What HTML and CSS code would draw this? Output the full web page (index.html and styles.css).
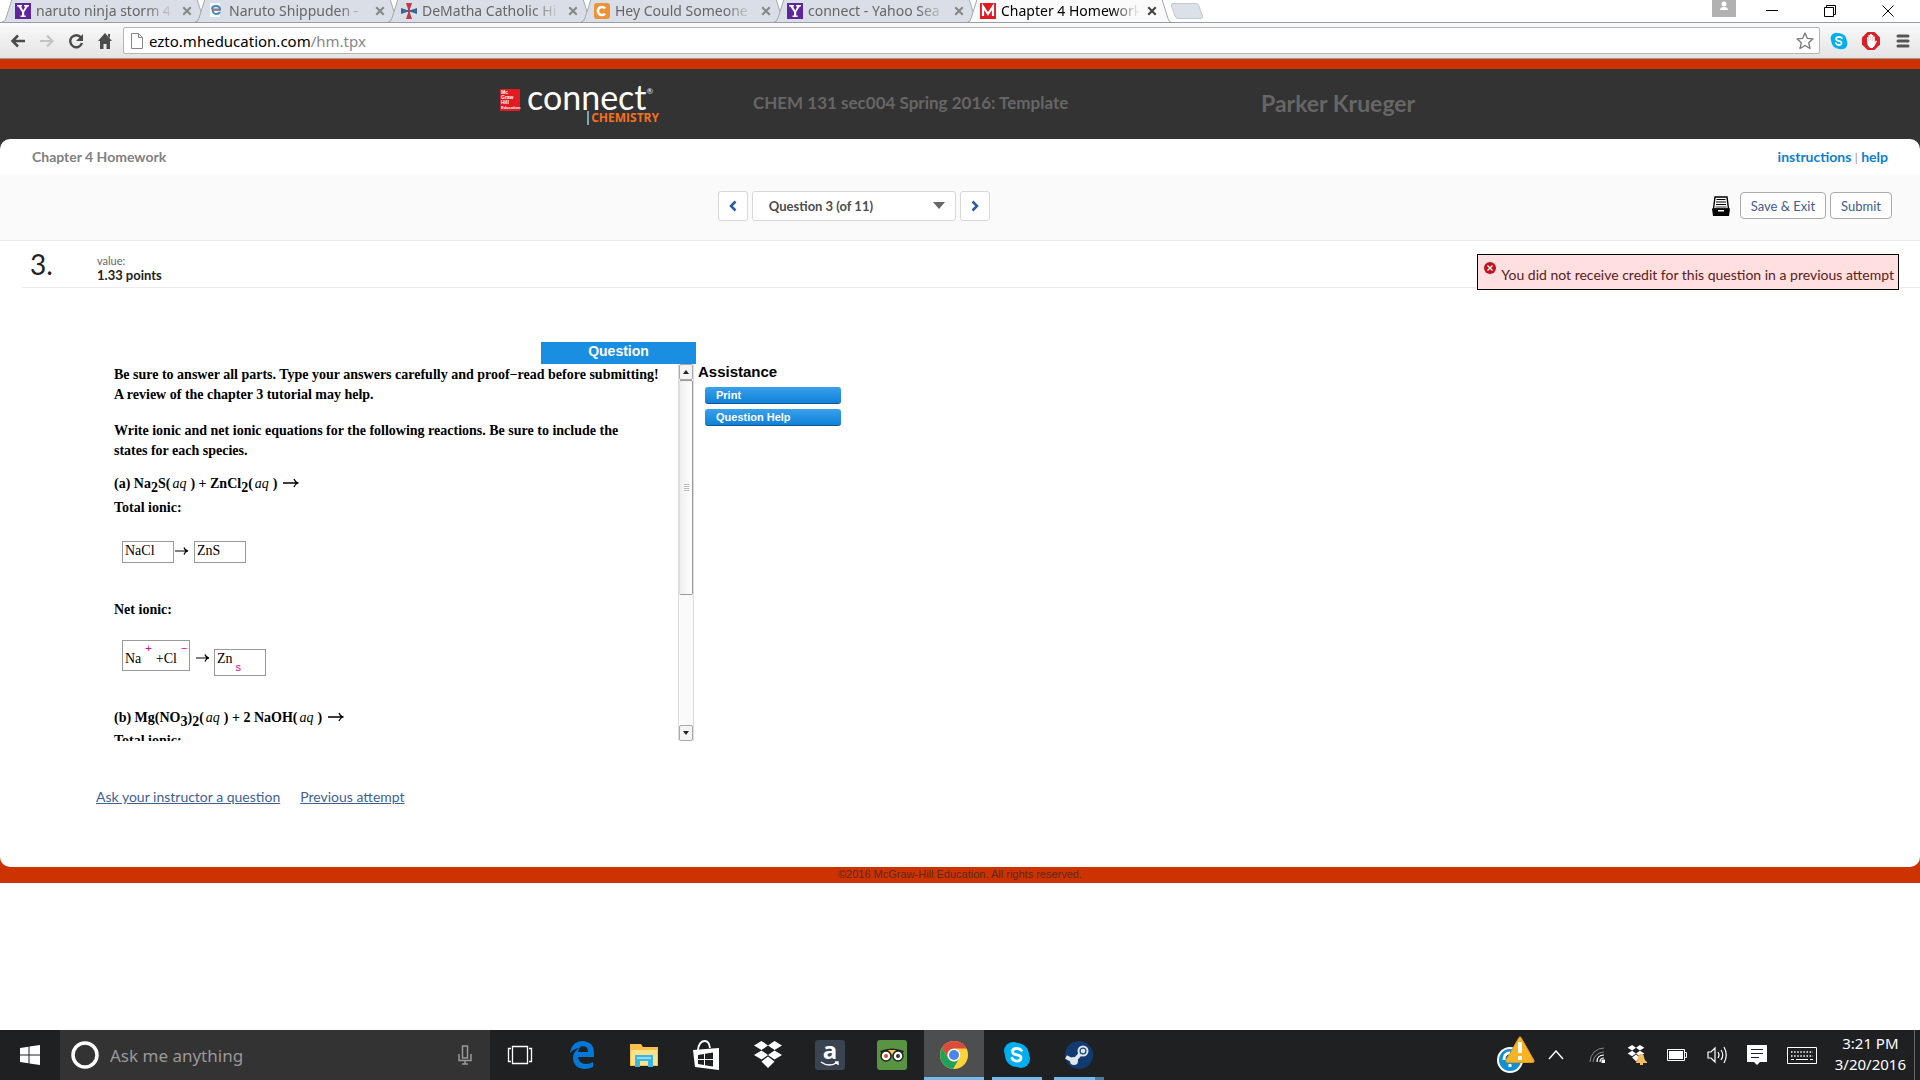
FILE: index.html
```html
<!DOCTYPE html>
<html lang="en">
<head>
<meta charset="utf-8">
<title>Chapter 4 Homework</title>
<link rel="stylesheet" href="styles.css">
</head>
<body>
<svg width="0" height="0" class="defs" aria-hidden="true">
  <symbol id="tabshape" viewBox="0 0 205 22"><path d="M0 22Q3 22 4 18L10 -1H195L201 18Q202 22 205 22"/></symbol>
  <symbol id="yahoo" viewBox="0 0 16 16"><path fill="#5f259f" d="M0 0h16v16H0z"/><path fill="#fff" d="M2 2h5v1.5H6L8.200 7.500 10.300 3.500H9V2h5v1.500h-1.200L9.200 9v3.500h1.500V14H5.500v-1.500H7V9L3.300 3.500H2z"/></symbol>
  <symbol id="x" viewBox="0 0 8 8"><path d="M1 1l6 6M7 1L1 7" fill="none" stroke="currentColor" stroke-width="1.700"/></symbol>
  <symbol id="skype" viewBox="0 0 28 28"><circle cx="10" cy="10" r="9"/><circle cx="18" cy="18" r="9"/><circle cx="14" cy="14" r="12"/><path d="M18.500 9.500Q17 7.500 14 7.500c-6 0-5.500 5.300-1 6.200l2 .5c4.600 1 3.600 6-1 6q-3.500 0-5-3" fill="none" stroke="#fff" stroke-width="2.800" stroke-linecap="round"/></symbol>
  <symbol id="dropbox" viewBox="0 0 30 28"><path fill="#fff" d="M8.500 0L15 4.500 8.500 9 1 4.500zM21.500 0L29 4.500 21.500 9 15 4.500zM8.500 9.500L15 14 8.500 18.500 1 14zM21.500 9.500L29 14 21.500 18.500 15 14zM15 15.500l6.500 5L15 27 8.500 20.500z"/></symbol>
</svg>

<header class="browser">
  <div class="tabstrip">
    <nav class="tabs" aria-label="Open tabs">
      <div class="tab"><svg class="shape" aria-hidden="true"><use href="#tabshape"/></svg><svg class="fav" aria-hidden="true"><use href="#yahoo"/></svg><a href="#">naruto ninja storm 4</a><button aria-label="Close tab"><svg><use href="#x"/></svg></button></div>
      <div class="tab"><svg class="shape" aria-hidden="true"><use href="#tabshape"/></svg><svg class="fav" viewBox="0 0 16 16" aria-hidden="true"><path fill="#f6f9fc" d="M2 0h10v14H2z"/><path d="M4 6Q4 3 8 3t4 3.500H4.500Q5 11 8 11t4-2" fill="none" stroke="#4688b8" stroke-width="2"/><path d="M5 7h7" stroke="#d66454" stroke-width="1.500"/></svg><a href="#">Naruto Shippuden -</a><button aria-label="Close tab"><svg><use href="#x"/></svg></button></div>
      <div class="tab"><svg class="shape" aria-hidden="true"><use href="#tabshape"/></svg><svg class="fav" viewBox="0 0 16 16" aria-hidden="true"><path fill="#c4384f" d="M5 0h6L9 6v4l2 6H5l2-6V6z"/><path fill="#3b6795" d="M0 5l6 2h4l6-2v6l-6-2H6l-6 2z"/><path fill="#c4384f" d="M7 5h2v6H7z"/></svg><a href="#">DeMatha Catholic Hi</a><button aria-label="Close tab"><svg><use href="#x"/></svg></button></div>
      <div class="tab"><svg class="shape" aria-hidden="true"><use href="#tabshape"/></svg><svg class="fav" viewBox="0 0 16 16" aria-hidden="true"><rect width="16" height="16" rx="3" fill="#ef9236"/><path d="M11 5.500A4 4 0 1 0 11 10.500" fill="none" stroke="#fff" stroke-width="2.600"/></svg><a href="#">Hey Could Someone</a><button aria-label="Close tab"><svg><use href="#x"/></svg></button></div>
      <div class="tab"><svg class="shape" aria-hidden="true"><use href="#tabshape"/></svg><svg class="fav" aria-hidden="true"><use href="#yahoo"/></svg><a href="#">connect - Yahoo Sea</a><button aria-label="Close tab"><svg><use href="#x"/></svg></button></div>
      <div class="tab active"><svg class="shape" aria-hidden="true"><use href="#tabshape"/></svg><svg class="fav" viewBox="0 0 16 16" aria-hidden="true"><path fill="#e21a22" d="M0 0h16v16H0z"/><path d="M3 13V3.500L8 11l5-7.500V13" fill="none" stroke="#fff" stroke-width="2.200"/></svg><a href="#">Chapter 4 Homework</a><button aria-label="Close tab"><svg><use href="#x"/></svg></button></div>
      <button class="newtab" aria-label="New tab"><svg viewBox="0 0 34 16"><path fill="#dce0e8" stroke="#c3c8d0" d="M3 .5H26Q28 .5 29 3L32.500 13Q33 15.500 31 15.500H8Q6 15.500 5 13L1.500 3Q1 .5 3 .5z"/></svg></button>
    </nav>
    <div class="winctl">
      <button class="person" aria-label="Profile"><svg viewBox="0 0 24 17"><circle cx="12" cy="4" r="2.500" fill="#fff"/><path fill="#fff" d="M8 10q0-3 4-3t4 3z"/></svg></button>
      <button aria-label="Minimize"><svg viewBox="0 0 12 12"><path d="M0 5.500h12"/></svg></button>
      <button aria-label="Restore"><svg viewBox="0 0 12 12"><path d="M.5 2.500h9v9h-9zM2.500 2.500v-2h9v9h-2"/></svg></button>
      <button aria-label="Close"><svg viewBox="0 0 12 12"><path d="M.5 .5l11 11M11.500 .5l-11 11"/></svg></button>
    </div>
  </div>
  <div class="toolbar">
    <button aria-label="Back"><svg viewBox="0 0 16 16"><path d="M15 8H3M8 2.500L2.500 8 8 13.500" fill="none" stroke="#4b4b4b" stroke-width="2.500"/></svg></button>
    <button aria-label="Forward"><svg viewBox="0 0 16 16"><path d="M1 8h12M8 2.500L13.500 8 8 13.500" fill="none" stroke="#c4c4c4" stroke-width="2.200"/></svg></button>
    <button aria-label="Reload"><svg viewBox="0 0 16 16"><path d="M13 4.500A6 6 0 1 0 14 10" fill="none" stroke="#4b4b4b" stroke-width="2.400"/><path fill="#4b4b4b" d="M15 1v7H8z"/></svg></button>
    <button aria-label="Home"><svg viewBox="0 0 16 16"><path fill="#4b4b4b" d="M8 0l7 8h-2v8H9.500v-5h-3v5H3V8H1zM11 1h2v4l-2-2z"/></svg></button>
    <div class="omnibox">
      <svg class="page" viewBox="0 0 12 16" aria-hidden="true"><path fill="#fff" stroke="#858585" d="M.5 .5h7l4 4v11H.5zM7.500 .5v4h4"/></svg>
      <div class="url" role="textbox" aria-label="Address">ezto.mheducation.com<span>/hm.tpx</span></div>
      <svg class="star" viewBox="0 0 18 18" aria-hidden="true"><path fill="#fff" stroke="#777" stroke-width="1.300" stroke-linejoin="round" d="M9 1l2.300 5.300 5.700.5-4.300 3.900 1.300 5.800L9 13.500l-5 3 1.300-5.800L1 6.800l5.700-.5z"/></svg>
    </div>
    <button class="ext" aria-label="Skype"><svg viewBox="0 0 28 28" fill="#00aff0"><use href="#skype"/></svg></button>
    <button class="ext" aria-label="AdBlock"><svg viewBox="0 0 18 18"><path fill="#db1f26" d="M5.500 0h7L18 5.500v7L12.500 18h-7L0 12.500v-7z"/><path fill="#fff" d="M5 9V5h1.500V3H8V2h1.700v1h1.600v1.500h1.500V10l1.200-1.500 1 .5-2.500 5-2 2H8L5.500 13z"/><path d="M6.700 5v4M8.500 4v4M10.500 5v4" stroke="#e89a9c" stroke-width=".5"/></svg></button>
    <button class="ext" aria-label="Menu"><svg viewBox="0 0 18 18"><path d="M4 4h10M4 9h10M4 14h10" stroke="#555" stroke-width="3" stroke-linecap="round"/></svg></button>
  </div>
</header>

<div class="site">
  <header class="brandbar">
    <a href="#" class="logo" aria-label="McGraw Hill Connect Chemistry">
      <span class="mgh">Mc<br>Graw<br>Hill<br><i>Education</i></span>
      <span class="words"><span class="connect">connect<sup>®</sup></span><span class="chem">CHEMISTRY</span></span>
    </a>
    <div class="course">CHEM 131 sec004 Spring 2016: Template</div>
    <div class="student">Parker Krueger</div>
  </header>

  <main class="card">
    <div class="subhead">
      <h1>Chapter 4 Homework</h1>
      <nav><a href="#">instructions</a> <span>|</span> <a href="#">help</a></nav>
    </div>
    <div class="controls">
      <div class="pager">
        <button aria-label="Previous question"><svg viewBox="0 0 10 12"><path d="M7.500 1.500L3 6l4.500 4.500"/></svg></button>
        <div class="picker"><select aria-label="Question"><option>Question 3 (of 11)</option></select><svg viewBox="0 0 12 7" aria-hidden="true"><path fill="#666" d="M0 0h12L6 7z"/></svg></div>
        <button aria-label="Next question"><svg viewBox="0 0 10 12"><path d="M2.500 1.500L7 6l-4.500 4.500"/></svg></button>
      </div>
      <div class="actions">
        <svg class="tray-icon" viewBox="0 0 18 20" aria-hidden="true"><path fill="#fff" stroke="#000" stroke-width="1.400" d="M3 1h12l1.500 12h-15z"/><path d="M4.500 3.500h9M4 6h10M4 8.500h10" stroke="#000" stroke-width="1.200"/><path fill="#999" d="M3.500 10h11v2h-11z"/><path fill="#000" d="M0 12.500h18L17 20H1z"/><path fill="#fff" d="M6 14h6v1.500H6z"/></svg>
        <button>Save &amp; Exit</button><button>Submit</button>
      </div>
    </div>
    <section class="qhead">
      <div class="num">3.</div>
      <div class="value"><span>value:</span><strong>1.33 points</strong></div>
      <div class="alert" role="alert"><svg viewBox="0 0 12 12" aria-hidden="true"><circle cx="6" cy="6" r="6" fill="#c1121c"/><path d="M3.500 3.500l5 5M8.500 3.500l-5 5" stroke="#fff" stroke-width="1.300"/></svg><span>You did not receive credit for this question in a previous attempt</span></div>
    </section>

    <div class="applet">
      <div class="work">
        <h2>Question</h2>
        <div class="pane">
          <div class="text">
            <p>Be sure to answer all parts. Type your answers carefully and proof−read before submitting!<br>A review of the chapter 3 tutorial may help.</p>
            <p>Write ionic and net ionic equations for the following reactions. Be sure to include the<br>states for each species.</p>
            <p class="eq">(a) Na<sub>2</sub>S(<i>aq</i>) + ZnCl<sub>2</sub>(<i>aq</i>) <svg viewBox="0 0 16 10" aria-label="yields"><path d="M0 5h15M11 1q1 3 4 4q-3 1-4 4"/></svg></p>
            <p class="label">Total ionic:</p>
            <div class="answer">
              <input value="NaCl" aria-label="Total ionic reactants"><svg viewBox="0 0 14 10" aria-hidden="true"><path d="M0 5h13M9 1.500q1 3 4 3.500q-3 .5-4 3.500"/></svg><input value="ZnS" aria-label="Total ionic products">
            </div>
            <p class="net">Net ionic:</p>
            <div class="answer ions">
              <div class="field sup" role="textbox" aria-label="Net ionic reactants">Na<sup>+</sup>+Cl<sup>−</sup></div><svg viewBox="0 0 14 10" aria-hidden="true"><path d="M0 5h13M9 1.500q1 3 4 3.500q-3 .5-4 3.500"/></svg><div class="field low" role="textbox" aria-label="Net ionic products">Zn<sub>s</sub></div>
            </div>
            <p class="eq">(b) Mg(NO<sub>3</sub>)<sub>2</sub>(<i>aq</i>) + 2 NaOH(<i>aq</i>) <svg viewBox="0 0 16 10" aria-label="yields"><path d="M0 5h15M11 1q1 3 4 4q-3 1-4 4"/></svg></p>
            <p class="label">Total ionic:</p>
          </div>
          <div class="scroll">
            <button aria-label="Scroll up"><svg viewBox="0 0 6 4"><path d="M0 4l3-4 3 4z"/></svg></button>
            <div class="thumb"><i></i></div>
            <button class="down" aria-label="Scroll down"><svg viewBox="0 0 6 4"><path d="M0 0h6L3 4z"/></svg></button>
          </div>
        </div>
      </div>
      <aside>
        <h3>Assistance</h3>
        <button>Print</button>
        <button>Question Help</button>
      </aside>
    </div>
    <nav class="links"><a href="#">Ask your instructor a question</a><a href="#">Previous attempt</a></nav>
  </main>
  <footer>©2016 McGraw-Hill Education. All rights reserved.</footer>
</div>

<footer class="taskbar">
  <button class="start" aria-label="Start"><svg viewBox="0 0 20 20"><path fill="#fff" d="M0 3l8.500-1.300v7.800H0zM9.500 1.500L20 0v9.500H9.500zM0 10.500h8.500v7.800L0 17zM9.500 10.500H20V20L9.500 18.500z"/></svg></button>
  <label class="search"><svg class="ring" viewBox="0 0 28 28" aria-hidden="true"><circle cx="14" cy="14" r="12" fill="none" stroke="#fff" stroke-width="3.500"/></svg><input placeholder="Ask me anything" aria-label="Ask me anything"><svg class="mic" viewBox="0 0 14 20" aria-hidden="true"><path d="M4.500 1h5v12h-5zM1 9v6.500h12V9M7 15.500V19M4 19h6" fill="none" stroke="#999" stroke-width="1.500"/></svg></label>
  <div class="apps">
    <button aria-label="Task view"><svg width="26" height="20" viewBox="0 0 26 20"><path d="M5.500 1.500h15v17h-15zM4 3.500H1.500v13H4M22 3.500h2.500v13H22" fill="none" stroke="#fff" stroke-width="1.300"/></svg></button>
    <button aria-label="Edge"><svg width="26" height="28" viewBox="0 0 26 28"><path fill="#0078d7" d="M1 12Q3 0 14 0q11 1 11 12v4H9q1 7 8 7 4 0 7-2v5q-4 2-9 2Q4 27 4 17q0-6 6-10Q4 8 1 12zm8-1h10q0-6-5-6-4 0-5 6z"/></svg></button>
    <button aria-label="File Explorer"><svg width="28" height="24" viewBox="0 0 28 24"><path fill="#f3c14c" d="M0 1h11l2 3h15v19H0z"/><path fill="#fde18b" d="M1 7h26v15H1z"/><path fill="#38b6e8" d="M5 12h18v12h-5v-6h-8v6H5z"/><path fill="#91d9f5" d="M7 14h14v2H7z"/></svg></button>
    <button aria-label="Store"><svg width="26" height="30" viewBox="0 0 26 30"><path fill="#fff" d="M0 10l26-2v22L2 27z"/><path d="M5 10Q6 1 12 1q4 0 5 7" fill="none" stroke="#fff" stroke-width="1.800"/><path fill="#202123" d="M5 15l6-1v5H5zM12 13.800l8-1.300V19h-8zM5 20h6v5l-6-1zM12 20h8v6.500l-8-1.300z"/></svg></button>
    <button aria-label="Dropbox"><svg width="30" height="28"><use href="#dropbox"/></svg></button>
    <button aria-label="Amazon"><span class="amazon">a<svg viewBox="0 0 20 6"><path d="M1 1q8 6 17 0M15 1h3v3" fill="none" stroke="#fff" stroke-width="1.400"/></svg></span></button>
    <button aria-label="TripAdvisor"><svg width="30" height="30" viewBox="0 0 30 30"><rect width="30" height="30" rx="3" fill="#589442"/><path fill="#222" d="M3 11q12-5 24 0l-2 3H5z"/><path fill="#fccc56" d="M11 10l4 5 4-5z"/><g fill="#fff" stroke="#222" stroke-width="1.500"><circle cx="9" cy="16" r="5"/><circle cx="21" cy="16" r="5"/></g><circle cx="9" cy="16" r="2" fill="#d84737"/><circle cx="21" cy="16" r="2" fill="#333"/></svg></button>
    <button class="on" aria-label="Chrome"><svg width="28" height="28" viewBox="0 0 28 28"><circle cx="14" cy="14" r="14" fill="#fdd33c"/><path fill="#dc4a3d" d="M2 7A14 14 0 0 1 26.500 7.500H14A6.500 6.500 0 0 0 8 17z"/><path fill="#1ea15d" d="M2 7a14 14 0 0 0 11 21l6-10A6.500 6.500 0 0 1 8 17z"/><circle cx="14" cy="14" r="6.300" fill="#fff"/><circle cx="14" cy="14" r="5" fill="#4a86e8"/></svg></button>
    <button class="run" aria-label="Skype"><svg width="28" height="28" fill="#00aff0"><use href="#skype"/></svg></button>
    <button class="run multi" aria-label="Steam"><svg width="28" height="28" viewBox="0 0 28 28"><circle cx="14" cy="14" r="14" fill="#103a70"/><path d="M1 16l8 4 8-9" fill="none" stroke="#dfe6ee" stroke-width="4"/><circle cx="18" cy="10" r="5.500" fill="#dfe6ee"/><circle cx="18" cy="10" r="3.500" fill="#17477d"/><circle cx="18" cy="10" r="2.300" fill="#dfe6ee"/><circle cx="9" cy="20" r="4" fill="#dfe6ee"/></svg></button>
  </div>
  <div class="systray">
    <svg class="warn" viewBox="0 0 38 38" aria-hidden="true"><circle cx="13" cy="24" r="13" fill="#fff"/><circle cx="13" cy="24" r="11" fill="#0f8fd5"/><path d="M7 24q0-7 6-7M13 28v3" stroke="#fff" stroke-width="3"/><path fill="#f8b225" stroke="#dd9a1c" d="M22 1.500Q23 0 24 1.500l13 23q.5 2-1.500 2H10.500q-2 0-1.500-2z"/><path d="M23 6v11M23 20v4" stroke="#fff" stroke-width="4"/></svg>
    <svg class="up" viewBox="0 0 16 10" aria-hidden="true"><path d="M1 9l7-8 7 8" fill="none" stroke="#fff" stroke-width="1.400"/></svg>
    <svg class="wifi" viewBox="0 0 16 16" aria-hidden="true"><path d="M1 15A14 14 0 0 1 15 1M4 15A11 11 0 0 1 15 5" fill="none" stroke="#888"/><path d="M8 15q0-7 7-7M11 15q0-4 4-4" fill="none" stroke="#fff" stroke-width="1.200"/><path fill="#fff" d="M12.500 12.500H16V16h-3.500z"/></svg>
    <svg class="drop" viewBox="0 0 20 20" aria-hidden="true"><use href="#dropbox" width="18" height="17"/><path fill="#f1bd5d" d="M9 17q2-2 2-5 0-3 3-3t3 3q0 3 3 5v1H9zM13 18h3v2h-3z"/></svg>
    <svg class="bat" viewBox="0 0 20 12" aria-hidden="true"><path fill="none" stroke="#fff" d="M.5 .5h17v11H.5zM17.500 3.500h2v5h-2"/><path fill="#fff" d="M2 2h14v8H2z"/></svg>
    <svg class="vol" viewBox="0 0 20 18" aria-hidden="true"><path d="M1 6h3l4-4v14l-4-4H1zM11 6q2 3 0 6M14 4q3.500 5 0 10M17 1q4.500 8 0 16" fill="none" stroke="#fff" stroke-width="1.200"/></svg>
    <svg class="note" viewBox="0 0 20 20" aria-hidden="true"><path fill="#fff" d="M0 0h20v17h-7l-3 3-3-3H0z"/><path d="M4 4.500h12M4 8.500h12M4 12.500h8" stroke="#202123" stroke-width="1.200"/></svg>
    <svg class="keys" viewBox="0 0 30 17" aria-hidden="true"><path fill="none" stroke="#fff" d="M.5 .5h29v16H.5z"/><path d="M4 5h22M4 9h22" stroke="#fff" stroke-width="1.500" stroke-dasharray="1.500 1.600"/><path d="M4 12.500h3M9 12.500h12M23 12.500h3" stroke="#fff"/></svg>
    <div class="clock">3:21 PM<br>3/20/2016</div>
  </div>
</footer>
</body>
</html>
```
FILE: styles.css
```css
* { box-sizing: border-box; }
body { margin: 0; min-height: 100vh; display: flex; flex-direction: column; background: #fff; color: #333; font: 14px "Open Sans", sans-serif; }
button, input, select { font: inherit; color: inherit; margin: 0; padding: 0; border: 0; background: none; }
button { display: flex; align-items: center; justify-content: center; flex: none; }
svg { display: block; flex: none; }
h1, h2, h3, p { margin: 0; }
.defs { position: absolute; }

/* browser window */
.tabstrip { display: flex; justify-content: space-between; height: 23px; overflow: hidden; background: #fff; border-bottom: 1px solid #999ea6; }
.tabs { display: flex; padding-left: 2px; }
.tab { position: relative; display: flex; align-items: center; flex: none; width: 205px; height: 22px; margin-right: -12px; padding: 0 11px 0 13px; color: #666; }
.tab .shape { position: absolute; inset: 0; width: 205px; height: 22px; fill: #dadee6; stroke: #a4a9b1; }
.tab.active { z-index: 1; color: #000; }
.tab.active .shape { fill: #fafafa; height: 23px; }
.fav { position: relative; width: 16px; height: 16px; margin-right: 5px; }
.tab a { position: relative; flex: 1; overflow: hidden; white-space: nowrap; color: inherit; text-decoration: none; font: 14px/20px "Noto Sans", sans-serif; mask-image: linear-gradient(90deg, #000 80%, transparent); }
.tab button { position: relative; width: 18px; height: 18px; margin-left: 4px; color: #888; }
.tab.active button { color: #444; }
.tab button svg { width: 10px; height: 10px; }
.newtab { margin: 3px 0 0 10px; height: 16px; }
.newtab svg { width: 34px; height: 16px; }
.winctl { display: flex; align-items: flex-start; padding-right: 3px; }
.winctl button { width: 58px; height: 22px; }
.winctl button svg { width: 12px; height: 12px; fill: none; stroke: #000; }
.winctl .person { width: 24px; height: 17px; margin-right: 7px; background: #b1b1b1; }
.winctl .person svg { width: 24px; height: 17px; stroke: none; }
.toolbar { display: flex; align-items: center; height: 36px; padding: 0 1px 0 3px; border-bottom: 1px solid #9a9a9a; background: linear-gradient(#fafafa, #e4e4e4); }
.toolbar > button { width: 29px; height: 28px; }
.toolbar > button svg { width: 16px; height: 16px; }
.omnibox { flex: 1; display: flex; align-items: center; height: 27px; margin: 0 3px 0 4px; padding: 0 5px 0 7px; border: 1px solid #b5b5b5; border-radius: 2px; background: #fff; }
.page { width: 12px; height: 16px; margin-right: 6px; }
.url { flex: 1; font: 15px/24px "Noto Sans", sans-serif; color: #000; }
.url span { color: #888; }
.star { width: 18px; height: 18px; }
.toolbar > .ext { width: 32px; }
.toolbar > .ext svg { width: 18px; height: 18px; }

/* site */
.site { background: #c30; padding-top: 10px; font-family: Lato, sans-serif; }
.brandbar { display: grid; grid-template-columns: 500px 253px 508px 1fr; align-items: center; height: 80px; margin-bottom: -10px; padding-bottom: 13px; background: #333; color: #666; font-weight: 700; }
.logo { grid-column: 2; display: flex; align-items: flex-start; gap: 7px; text-decoration: none; color: #fff; }
.mgh { width: 20px; height: 22px; margin-top: 9px; padding: 1px; background: #e21a22; font: 700 5px/5px "Liberation Sans", sans-serif; }
.mgh i { font-size: 4px; font-style: normal; display: block; }
.words { display: flex; flex-direction: column; width: 132px; }
.connect { font: 34px/34px Lato, sans-serif; height: 31px; white-space: nowrap; }
.connect sup { font-size: 8px; line-height: 8px; vertical-align: 16px; }
.chem { align-self: flex-end; padding-left: 2px; border-left: 2px solid #7ba5bd; color: #f37021; font: 700 12px/14px "Open Sans", sans-serif; }
.course { font-size: 17px; }
.student { font-size: 23px; }
.card { position: relative; border-radius: 10px; background: #fff; overflow: hidden; min-height: 728px; }
.subhead { display: flex; align-items: center; justify-content: space-between; height: 36px; padding: 0 32px 1px; font-size: 14px; font-weight: 700; }
.subhead h1 { font-size: 14px; color: #808080; }
.subhead a { color: #0b7fd3; text-decoration: none; }
.subhead span { color: #b88; font-weight: 400; font-size: 12px; }
.controls { display: grid; grid-template-columns: 13fr auto 17fr; align-items: center; height: 66px; padding: 0 28px 4px; background: #fafafa; border-bottom: 1px solid #ebebeb; }
.pager { grid-column: 2; display: flex; gap: 4px; }
.pager button, .picker { height: 30px; border: 1px solid #d8d8d8; border-radius: 3px; background: #fff; }
.pager button { width: 30px; }
.pager button svg { width: 10px; height: 12px; fill: none; stroke: #2a5ca0; stroke-width: 2.5; }
.picker { display: flex; align-items: center; width: 204px; padding-right: 10px; color: #4d4d4d; }
.picker select { flex: 1; height: 28px; padding-left: 16px; appearance: none; font-size: 13px; font-weight: 700; }
.picker svg { width: 12px; height: 7px; }
.actions { display: flex; justify-content: flex-end; align-items: center; gap: 4px; }
.actions button { height: 27px; padding: 0 10px; border: 1px solid #aaa; border-radius: 4px; background: #fff; color: #3f5b8d; font-size: 13px; }
.tray-icon { width: 18px; height: 20px; margin-right: 6px; }
.qhead { display: flex; align-items: flex-start; height: 47px; margin-left: 22px; padding: 0 21px 0 8px; border-bottom: 1px solid #ebebeb; }
.num { width: 67px; font-size: 28px; line-height: 46px; color: #222; }
.value { display: flex; flex-direction: column; flex: 1; padding-top: 13px; }
.value span { font-size: 11px; line-height: 14px; color: #666; }
.value strong { font-size: 13px; line-height: 15px; color: #222; }
.alert { display: flex; height: 36px; margin-top: 13px; padding: 7px 4px 0 6px; border: 1px solid #000; background: #ffdfdf; color: #5b2020; font-size: 14px; }
.alert svg { width: 12px; height: 12px; margin-right: 5px; }
.alert span { line-height: 18px; padding-top: 4px; }
.applet { display: flex; padding: 54px 0 0 96px; }
.work { width: 600px; }
.work h2 { width: 155px; height: 22px; margin-left: auto; background: #1a8ee0; color: #fff; font: 700 14px/19px "Liberation Sans", sans-serif; text-align: center; }
.pane { display: flex; height: 377px; overflow: hidden; }
.text { flex: 1; padding: 1px 0 0 18px; white-space: nowrap; color: #000; font: 700 14px/20px "Liberation Serif", serif; }
.text p { margin-bottom: 16px; }
.text .eq { display: flow-root; height: 24px; margin: -5px 0 0; line-height: 24px; }
.eq i { font-weight: 400; padding: 0 4px 0 2px; }
.eq sub { font-size: 14px; line-height: 0; vertical-align: -4px; }
.eq svg { display: inline-block; width: 16px; height: 10px; margin-left: 2px; fill: none; stroke: #000; stroke-width: 1.3; }
.text .label { margin: 0; line-height: 24px; }
.answer { display: flex; align-items: center; height: 54px; padding: 10px 0 0 8px; font-weight: 400; }
.answer > svg { width: 14px; height: 10px; margin: 0 5px 2px 1px; fill: none; stroke: #000; stroke-width: 1.2; }
.answer input, .field { width: 52px; height: 22px; padding: 0 2px; border: 1px solid #999; background: #fff; line-height: 18px; }
.answer input { padding-bottom: 3px; }
.text .net { margin: 16px 0 0; padding-top: 10px; }
.answer.ions { height: 58px; align-items: flex-start; padding-top: 20px; }
.field.sup { width: 68px; height: 31px; line-height: 35px; display: flex; }
.field sup, .field sub { color: #e3008c; font: 11px/12px "Liberation Sans", sans-serif; padding: 0 3px; }
.field sup { padding: 1px 4px 0; }
.ions > svg { margin: 13px 4px 0 6px; }
.field.low { height: 27px; margin-top: 9px; display: flex; }
.field sub { padding-top: 11px; }
.text .ions + .eq { margin-top: 28px; }
.ions ~ .label { margin-top: -1px; }
.scroll { display: flex; flex-direction: column; width: 16px; margin-right: 2px; border: solid #ddd; border-width: 0 1px; background: #fafafa; }
.scroll button { height: 16px; border: 1px solid #aaa; border-radius: 2px; background: #f4f4f4; }
.scroll svg { width: 6px; height: 4px; fill: #222; }
.thumb { display: flex; align-items: center; justify-content: center; height: 215px; border: 1px solid #999; border-left-color: #ddd; border-radius: 2px; background: linear-gradient(90deg, #eee, #fff); }
.thumb i { width: 5px; height: 8px; background: repeating-linear-gradient(#b5bcbc 0 1px, #fff 1px 2px); }
.scroll .down { margin-top: auto; }
aside { padding: 20px 0 0 2px; }
aside h3 { color: #000; font: 700 15px/20px "Liberation Sans", sans-serif; margin-bottom: 5px; }
aside button { width: 136px; height: 17px; margin: 0 0 5px 7px; padding-left: 11px; justify-content: flex-start; border-radius: 3px; border-bottom: 1px solid #16558a; background: linear-gradient(#3aa0ec, #0f82d8); color: #fff; font: 700 11px/16px "Liberation Sans", sans-serif; }
.links { display: flex; gap: 20px; padding: 47px 0 0 96px; font-size: 14px; }
.links a { color: #3f5f95; }
.site > footer { height: 16px; color: #5a2a1a; text-align: center; font: 11px/15px "Liberation Sans", sans-serif; }

/* desktop taskbar */
.taskbar { display: flex; height: 50px; margin-top: auto; background: #1f2022; color: #fff; }
.start { width: 60px; }
.start svg { width: 20px; height: 20px; }
.search { display: flex; align-items: center; width: 430px; padding: 0 18px 0 11px; background: #333; }
.ring { width: 28px; height: 28px; }
.search input { flex: 1; padding-left: 11px; font-family: "Noto Sans", sans-serif; font-size: 17px; }
.search input::placeholder { color: #999; opacity: 1; }
.mic { width: 14px; height: 22px; }
.apps { display: flex; }
.apps button { width: 60px; height: 50px; margin-right: 2px; }
.apps .on { background: #4d4e50; }
.apps .on, .apps .run { border-bottom: 3px solid #76b9ed; padding-top: 3px; }
.apps .run { width: 50px; margin: 0 6px; }
.apps .multi { border-image: linear-gradient(90deg, #76b9ed 80%, #4d7ba0 80%) 1; border-width: 0 0 3px; border-style: solid; }
.amazon { display: flex; flex-direction: column; align-items: center; width: 30px; height: 30px; border-radius: 3px; background: #3a4350; font: 700 24px/20px "Open Sans", sans-serif; }
.amazon svg { width: 20px; height: 6px; margin-top: 1px; }
.systray { display: flex; align-items: center; margin-left: auto; margin-right: 5px; padding-right: 8px; border-right: 1px solid #666; }
.warn { width: 38px; height: 38px; margin-right: 13px; }
.up { width: 16px; height: 10px; margin-right: 25px; }
.wifi { width: 16px; height: 16px; margin-right: 22px; }
.drop { width: 20px; height: 20px; margin-right: 20px; }
.bat { width: 20px; height: 12px; margin-right: 20px; }
.vol { width: 20px; height: 18px; margin-right: 20px; }
.note { width: 20px; height: 20px; margin-right: 20px; }
.keys { width: 30px; height: 17px; margin-right: 18px; }
.clock { text-align: center; font: 15px/21px "Noto Sans", sans-serif; padding-bottom: 2px; }
```
